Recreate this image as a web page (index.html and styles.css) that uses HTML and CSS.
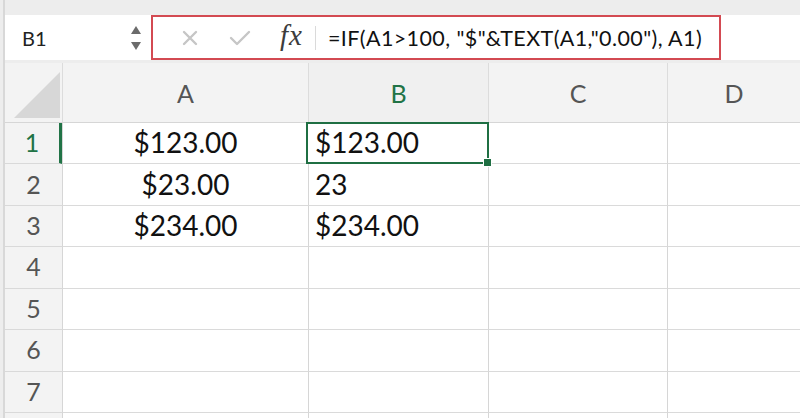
FILE: index.html
```html
<!DOCTYPE html>
<html lang="en">
<head>
    <meta charset="UTF-8">
    <title>Sheet - IF with TEXT</title>
    <link rel="stylesheet" href="styles.css">
</head>
<body>

<div class="window">

    <!-- Formula Bar -->
    <div class="formula-row">
        <div class="name-box">
            <span class="cell-ref">B1</span>
            <svg class="spinner" width="12" height="30" viewBox="0 0 12 30">
                <polygon points="6,3 11,11 1,11" fill="#6b6b6b"/>
                <polygon points="6,27 11,19 1,19" fill="#6b6b6b"/>
            </svg>
        </div>
        <div class="formula-box">
            <svg class="icon" width="18" height="18" viewBox="0 0 18 18">
                <path d="M3 3 L15 15 M15 3 L3 15" stroke="#c6c6c6" stroke-width="2.4" stroke-linecap="round"/>
            </svg>
            <svg class="icon" width="22" height="18" viewBox="0 0 22 18">
                <path d="M2 9 L8 15 L20 3" stroke="#c6c6c6" stroke-width="2.4" fill="none" stroke-linecap="round" stroke-linejoin="round"/>
            </svg>
            <span class="fx">fx</span>
            <span class="divider"></span>
            <span class="formula">=IF(A1&gt;100, "$"&amp;TEXT(A1,"0.00"), A1)</span>
        </div>
        <div class="formula-rest"></div>
    </div>

    <!-- Grid -->
    <div class="sheet">
        <div class="head corner">
            <svg width="48" height="48" viewBox="0 0 48 48">
                <polygon points="47,1 47,47 1,47" fill="#d7d7d7"/>
            </svg>
        </div>
        <div class="head col">A</div>
        <div class="head col active-col">B</div>
        <div class="head col">C</div>
        <div class="head col">D</div>

        <div class="head row active-row">1</div>
        <div class="cell center">$123.00</div>
        <div class="cell selected">$123.00</div>
        <div class="cell"></div>
        <div class="cell"></div>

        <div class="head row">2</div>
        <div class="cell center">$23.00</div>
        <div class="cell">23</div>
        <div class="cell"></div>
        <div class="cell"></div>

        <div class="head row">3</div>
        <div class="cell center">$234.00</div>
        <div class="cell">$234.00</div>
        <div class="cell"></div>
        <div class="cell"></div>

        <div class="head row">4</div>
        <div class="cell"></div>
        <div class="cell"></div>
        <div class="cell"></div>
        <div class="cell"></div>

        <div class="head row">5</div>
        <div class="cell"></div>
        <div class="cell"></div>
        <div class="cell"></div>
        <div class="cell"></div>

        <div class="head row">6</div>
        <div class="cell"></div>
        <div class="cell"></div>
        <div class="cell"></div>
        <div class="cell"></div>

        <div class="head row">7</div>
        <div class="cell"></div>
        <div class="cell"></div>
        <div class="cell"></div>
        <div class="cell"></div>

        <div class="head row"></div>
        <div class="cell"></div>
        <div class="cell"></div>
        <div class="cell"></div>
        <div class="cell"></div>
    </div>
</div>

</body>
</html>
```

FILE: styles.css
```css
/* General */
* {
    margin: 0;
    padding: 0;
    box-sizing: border-box;
}

body {
    width: 800px;
    height: 418px;
    overflow: hidden;
    background: #ededed;
    font-family: Lato, "Open Sans", sans-serif;
    color: #1e1e1e;
}

.window {
    padding-top: 15px;
    margin-left: 3px;
    border-left: 2px solid #d8d8d8;
}

/* Formula bar */
.formula-row {
    display: flex;
    height: 45px;
    background: #fff;
}

.name-box {
    width: 146px;
    display: flex;
    align-items: center;
    justify-content: space-between;
    padding: 0 9px 0 17px;
}

.cell-ref {
    font-size: 20px;
    color: #222;
}

.formula-box {
    width: 570px;
    display: flex;
    align-items: center;
    border: 2px solid #d34a52;
    padding-left: 28px;
}

.icon {
    margin-right: 30px;
}

.fx {
    font-family: "Liberation Serif", serif;
    font-style: italic;
    font-size: 29px;
    color: #3c3c3c;
    margin-left: -1px;
    margin-bottom: 4px;
    letter-spacing: 1px;
}

.divider {
    width: 1px;
    height: 24px;
    background: #dadada;
    margin: 0 12px 0 12px;
}

.formula {
    font-size: 21.5px;
    letter-spacing: 0.4px;
    color: #111;
    white-space: nowrap;
}

.formula-rest {
    flex: 1;
}

/* Sheet */
.sheet {
    margin-top: 3px;
    display: grid;
    grid-template-columns: 57px 246px 180px 179px 1fr;
    grid-template-rows: 60px repeat(7, 41.43px) 8px;
    background: #fff;
}

.head {
    background: #f3f3f3;
    color: #555;
    font-size: 25px;
    display: flex;
    align-items: center;
    justify-content: center;
}

.col {
    border-left: 1px solid #dcdcdc;
    border-bottom: 1px solid #d6d6d6;
}

.corner {
    align-items: flex-end;
    justify-content: flex-end;
    padding: 0 1px 3px 0;
    border-bottom: 1px solid #d6d6d6;
}

.row {
    border-bottom: 1px solid #d9d9d9;
    padding-bottom: 2px;
}

.active-col {
    color: #217346;
    background: #f0f0f0;
}

.active-row {
    color: #217346;
    border-right: 3px solid #217346;
}

.cell {
    border-left: 1px solid #d6d6d6;
    border-bottom: 1px solid #dadada;
    font-size: 28px;
    color: #111;
    display: flex;
    align-items: center;
    padding: 0 0 2px 6px;
}

.center {
    justify-content: center;
    padding-left: 0;
}

.selected {
    position: relative;
    border: 2px solid #1f6f43;
    margin: -1px -1px 0 -2px;
    padding-left: 7px;
}

.selected::after {
    content: "";
    position: absolute;
    right: -5px;
    bottom: -5px;
    width: 7px;
    height: 7px;
    background: #1f6f43;
    border: 1px solid #fff;
}
```
